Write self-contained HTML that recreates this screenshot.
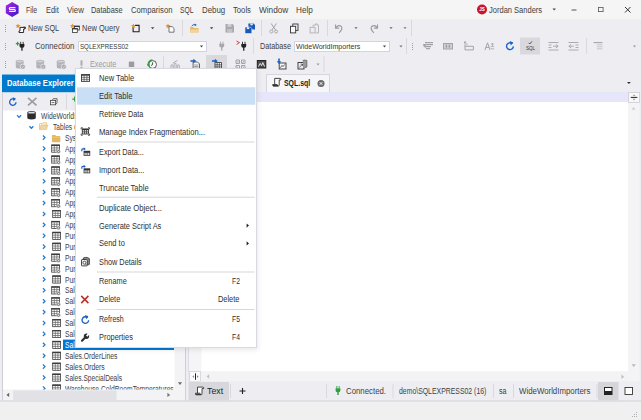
<!DOCTYPE html>
<html><head><meta charset="utf-8"><title>dbForge Studio</title>
<style>
html,body{margin:0;padding:0;}
body{width:641px;height:420px;position:relative;overflow:hidden;background:#eeeef2;font-family:"Liberation Sans", sans-serif;}
body>div,body>svg,body>span{position:absolute;display:block;}
body>span{white-space:nowrap;line-height:12px;height:12px;transform-origin:0 50%;}
svg{overflow:visible;}
</style></head><body>
<div style="left:0px;top:0px;width:641px;height:19px;background:#f5f5f5;"></div>
<svg style="left:5px;top:1px;" width="16" height="18"><g transform="translate(0,0.5)"><defs><linearGradient id="lg" x1="0" y1="0" x2="1" y2="1"><stop offset="0" stop-color="#b026e8"/><stop offset="1" stop-color="#3a16c8"/></linearGradient></defs><polygon points="7.2,0.5 13.6,4.2 13.6,11.7 7.2,15.4 0.8,11.7 0.8,4.2" fill="url(#lg)"/><path d="M10.4 6.1 H5.4 Q4.3 6.1 4.3 7.05 Q4.3 8 5.4 8 H9.3 Q10.4 8 10.4 8.95 Q10.4 9.9 9.3 9.9 H4.2" fill="none" stroke="#fff" stroke-width="1.15"/></g></svg>
<span id="t0" style="left:26.40px;top:3.50px;font-size:8.5px;color:#3e3e3e;transform:scaleX(0.8071);">File</span>
<span id="t1" style="left:46.10px;top:3.50px;font-size:8.5px;color:#3e3e3e;transform:scaleX(0.8733);">Edit</span>
<span id="t2" style="left:66.60px;top:3.50px;font-size:8.5px;color:#3e3e3e;transform:scaleX(0.9222);">View</span>
<span id="t3" style="left:91.40px;top:3.50px;font-size:8.5px;color:#3e3e3e;transform:scaleX(0.8694);">Database</span>
<span id="t4" style="left:130.60px;top:3.50px;font-size:8.5px;color:#3e3e3e;transform:scaleX(0.9043);">Comparison</span>
<span id="t5" style="left:180.40px;top:3.50px;font-size:8.5px;color:#3e3e3e;transform:scaleX(0.8000);">SQL</span>
<span id="t6" style="left:202.10px;top:3.50px;font-size:8.5px;color:#3e3e3e;transform:scaleX(0.9240);">Debug</span>
<span id="t7" style="left:233.40px;top:3.50px;font-size:8.5px;color:#3e3e3e;transform:scaleX(0.9050);">Tools</span>
<span id="t8" style="left:259.10px;top:3.50px;font-size:8.5px;color:#3e3e3e;transform:scaleX(0.9700);">Window</span>
<span id="t9" style="left:295.90px;top:3.50px;font-size:8.5px;color:#3e3e3e;transform:scaleX(0.9588);">Help</span>
<svg style="left:477px;top:4px;" width="11" height="12"><g transform="translate(0,0.5)"><circle cx="5" cy="5" r="5" fill="#c8142c"/><text x="5" y="6.9" font-size="4.6" font-weight="bold" fill="#fff" text-anchor="middle" font-family="Liberation Sans, sans-serif">JS</text></g></svg>
<span id="t10" style="left:489.10px;top:3.50px;font-size:8.5px;color:#3e3e3e;transform:scaleX(0.8850);">Jordan Sanders</span>
<svg style="left:552px;top:8px;" width="5" height="4"><g transform="translate(0.5,0.5)"><polygon points="0,0 3.4,0 1.7,2" fill="#444"/></g></svg>
<svg style="left:571px;top:9px;" width="7" height="3"><g transform="translate(0.5,0.5)"><rect x="0" y="0" width="5" height="1" fill="#555"/></g></svg>
<svg style="left:598px;top:7px;" width="7" height="6"><g transform="translate(0,0)"><rect x="0.4" y="0.4" width="4.7" height="4.2" fill="none" stroke="#555" stroke-width="0.8"/></g></svg>
<svg style="left:625px;top:7px;" width="7" height="7"><g transform="translate(0,0)"><path d="M0 0 L5.5 5.5 M5.5 0 L0 5.5" stroke="#333" stroke-width="1"/></g></svg>
<div style="left:5px;top:25px;width:1px;height:1px;background:#9c9ca2;"></div>
<div style="left:5px;top:27px;width:1px;height:1px;background:#9c9ca2;"></div>
<div style="left:5px;top:29px;width:1px;height:1px;background:#9c9ca2;"></div>
<div style="left:5px;top:31px;width:1px;height:1px;background:#9c9ca2;"></div>
<svg style="left:16px;top:24px;" width="10" height="10"><g transform="translate(0,0)"><path d="M2 -0.5 L2.75 1.1 L4.5 1.3 L3.2 2.5 L3.55 4.2 L2 3.35 L0.45 4.2 L0.8 2.5 L-0.5 1.3 L1.25 1.1 Z" fill="#e8922a"/><path d="M4 3.4 H9 V5 H7.6 V8.5 H3 V7 H4 Z" fill="#fafafc" stroke="#2c2c2c" stroke-width="1"/><path d="M7.2 3.4 H9 V4.8" stroke="#2c2c2c" stroke-width="1.4" fill="none"/></g></svg>
<span id="t11" style="left:28.40px;top:22.00px;font-size:8.5px;color:#3e3e3e;transform:scaleX(0.8556);">New SQL</span>
<svg style="left:70px;top:24px;" width="11" height="10"><g transform="translate(0.5,0)"><path d="M2 -0.5 L2.75 1.1 L4.5 1.3 L3.2 2.5 L3.55 4.2 L2 3.35 L0.45 4.2 L0.8 2.5 L-0.5 1.3 L1.25 1.1 Z" fill="#e8922a"/><rect x="4" y="2.2" width="4.8" height="3.8" fill="#f8f8fa" stroke="#333" stroke-width="0.8"/><rect x="3.6" y="1.8" width="5.6" height="1.2" fill="#333"/><rect x="2" y="4.6" width="4.8" height="3.8" fill="#fdfdfd" stroke="#333" stroke-width="0.8"/><rect x="1.6" y="4.2" width="5.6" height="1.2" fill="#333"/></g></svg>
<span id="t12" style="left:82.10px;top:22.00px;font-size:8.5px;color:#3e3e3e;transform:scaleX(0.8791);">New Query</span>
<svg style="left:131px;top:24px;" width="11" height="10"><g transform="translate(0.5,0)"><path d="M2 -0.5 L2.75 1.1 L4.5 1.3 L3.2 2.5 L3.55 4.2 L2 3.35 L0.45 4.2 L0.8 2.5 L-0.5 1.3 L1.25 1.1 Z" fill="#e8922a"/><path d="M3.6 1.4 H7.6 V7.8 H1.6 V3.6" fill="none" stroke="#222" stroke-width="1.1"/></g></svg>
<svg style="left:150px;top:27px;" width="6" height="4"><g transform="translate(0.9,0.2)"><polygon points="0,0 3.4,0 1.7,2" fill="#444"/></g></svg>
<svg style="left:166px;top:24px;" width="10" height="10"><g transform="translate(0,0)"><path d="M2 -0.5 L2.75 1.1 L4.5 1.3 L3.2 2.5 L3.55 4.2 L2 3.35 L0.45 4.2 L0.8 2.5 L-0.5 1.3 L1.25 1.1 Z" fill="#e8922a"/><path d="M3 2.6 H6.2 L8 4.4 V8.2 H3 Z" fill="#fbfbfd" stroke="#555" stroke-width="0.8"/></g></svg>
<div style="left:182px;top:20px;width:1px;height:16px;background:#d8d8de;"></div>
<svg style="left:189px;top:23px;" width="12" height="12"><g transform="translate(0.5,0.5)"><path d="M0.6 3.6 H3.6 L4.6 4.6 H9 V9 H0.6 Z" fill="#e9b96a"/><path d="M1.4 6 H9.6 L8.6 9 H0.6 Z" fill="#f3d59c"/><path d="M2.2 2.6 Q3.4 0.6 6 1.2" fill="none" stroke="#1e66c8" stroke-width="1"/><path d="M5.2 0 L7.4 1.4 L5.2 2.8 Z" fill="#1e66c8"/></g></svg>
<svg style="left:209px;top:27px;" width="6" height="4"><g transform="translate(0.9,0.2)"><polygon points="0,0 3.4,0 1.7,2" fill="#444"/></g></svg>
<svg style="left:225px;top:24px;" width="10" height="10"><g transform="translate(0.5,0)"><path d="M0 0 H7 L8.5 1.5 V8.5 H0 Z" fill="#a9a9ad"/><rect x="2" y="0" width="4" height="2.8" fill="#d0d0d4"/><rect x="1.6" y="5" width="5.2" height="3.5" fill="#c4c4c8"/></g></svg>
<svg style="left:245px;top:23px;" width="11" height="12"><g transform="translate(0,0.5)"><path d="M3.4 0 H8.6 L10 1.4 V6 H3.4 Z" fill="#1758b8"/><path d="M0 3.6 H5.4 L6.8 5 V10 H0 Z" fill="#1758b8" stroke="#eeeef2" stroke-width="0.6"/><rect x="5.4" y="0" width="2.4" height="1.8" fill="#eeeef2"/><rect x="1.8" y="3.8" width="2.4" height="1.8" fill="#eeeef2"/></g></svg>
<div style="left:261px;top:20px;width:1px;height:16px;background:#d8d8de;"></div>
<svg style="left:269px;top:23px;" width="10" height="12"><g transform="translate(0.5,0.5)"><path d="M1.6 0 L6 6.4 M6.9 0 L2.5 6.4" stroke="#a2a2a6" stroke-width="1" fill="none"/><circle cx="1.9" cy="8" r="1.5" fill="none" stroke="#a2a2a6" stroke-width="0.9"/><circle cx="6.6" cy="8" r="1.5" fill="none" stroke="#a2a2a6" stroke-width="0.9"/></g></svg>
<svg style="left:290px;top:23px;" width="10" height="12"><g transform="translate(0,0.5)"><rect x="2.8" y="0.5" width="5.2" height="6.4" fill="#f4f4f6" stroke="#333" stroke-width="0.9"/><rect x="0.5" y="2.8" width="5.2" height="6.6" fill="#f8f8fa" stroke="#333" stroke-width="0.9"/></g></svg>
<svg style="left:309px;top:23px;" width="11" height="12"><g transform="translate(0.5,0.5)"><path d="M3.6 3.2 V1.6 H6 V0.4 H7.6 V1.6 H9 V9.4 H6.4" fill="none" stroke="#b0b0b4" stroke-width="0.9"/><rect x="0.6" y="3.8" width="5" height="5.6" fill="none" stroke="#b0b0b4" stroke-width="0.9"/></g></svg>
<div style="left:327px;top:20px;width:1px;height:16px;background:#d8d8de;"></div>
<svg style="left:333px;top:23px;" width="12" height="12"><g transform="translate(0.5,0.5)"><path d="M2 1 V4.6 H5.6" fill="none" stroke="#9c9ca0" stroke-width="1.1"/><path d="M2.2 4.4 Q5 0.6 7.8 3 Q9.6 5.4 5.6 9.4" fill="none" stroke="#9c9ca0" stroke-width="1.2"/></g></svg>
<svg style="left:354px;top:27px;" width="5" height="4"><g transform="translate(0.4,0.3)"><polygon points="0,0 3.2,0 1.6,1.8" fill="#666"/></g></svg>
<svg style="left:369px;top:23px;" width="12" height="12"><g transform="translate(0.5,0.5)"><path d="M8 1 V4.6 H4.4" fill="none" stroke="#9c9ca0" stroke-width="1.1"/><path d="M7.8 4.4 Q5 0.6 2.2 3 Q0.4 5.4 4.4 9.4" fill="none" stroke="#9c9ca0" stroke-width="1.2"/></g></svg>
<svg style="left:389px;top:27px;" width="5" height="4"><g transform="translate(0.4,0.3)"><polygon points="0,0 3.2,0 1.6,1.8" fill="#666"/></g></svg>
<svg style="left:403px;top:27px;" width="5" height="4"><g transform="translate(0.4,0.3)"><polygon points="0,0 3.2,0 1.6,1.8" fill="#777"/></g></svg>
<div style="left:411px;top:20px;width:1px;height:16px;background:#d8d8de;"></div>
<div style="left:5px;top:43px;width:1px;height:1px;background:#9c9ca2;"></div>
<div style="left:5px;top:45px;width:1px;height:1px;background:#9c9ca2;"></div>
<div style="left:5px;top:47px;width:1px;height:1px;background:#9c9ca2;"></div>
<div style="left:5px;top:49px;width:1px;height:1px;background:#9c9ca2;"></div>
<svg style="left:15px;top:41px;" width="6" height="6"><g transform="translate(0.8,0.8)"><path d="M1.8 0 V3.6 M0 1.8 H3.6" stroke="#2f9e3f" stroke-width="1.3"/></g></svg>
<svg style="left:19px;top:41px;" width="7" height="11"><g transform="translate(0.2,0.8)"><path d="M1.5 0 V2.4 M4 0 V2.4" stroke="#222" stroke-width="0.9"/><path d="M0.3 2.2 H5.2 V4.2 Q5.2 5.8 3.4 6 V9 H2.1 V6 Q0.3 5.8 0.3 4.2 Z" fill="#222"/></g></svg>
<span id="t13" style="left:35.40px;top:40.00px;font-size:8.5px;color:#3e3e3e;transform:scaleX(0.9163);">Connection</span>
<div style="left:78px;top:40.5px;width:128.5px;height:11.5px;background:#fff;border:1px solid #d3d3e6;box-sizing:border-box;"></div>
<span id="t14" style="left:80.40px;top:40.90px;font-size:8.0px;color:#333;transform:scaleX(0.7714);">SQLEXPRESS02</span>
<svg style="left:199px;top:45px;" width="6" height="4"><g transform="translate(0.9,0.6)"><polygon points="0,0 3.2,0 1.6,1.8" fill="#444"/></g></svg>
<svg style="left:219px;top:41px;" width="7" height="11"><g transform="translate(0,0.6)"><path d="M1.5 0 V2.4 M4 0 V2.4" stroke="#a8a8ac" stroke-width="0.9"/><path d="M0.3 2.2 H5.2 V4.2 Q5.2 5.8 3.4 6 V9 H2.1 V6 Q0.3 5.8 0.3 4.2 Z" fill="#a8a8ac"/></g></svg>
<svg style="left:241px;top:41px;" width="7" height="11"><g transform="translate(0,0.8)"><path d="M1.5 0 V2.4 M4 0 V2.4" stroke="#222" stroke-width="0.9"/><path d="M0.3 2.2 H5.2 V4.2 Q5.2 5.8 3.4 6 V9 H2.1 V6 Q0.3 5.8 0.3 4.2 Z" fill="#222"/></g></svg>
<svg style="left:236px;top:41px;" width="6" height="5"><g transform="translate(0.5,0)"><path d="M0 0 L3 1.6 L0 3.4" fill="none" stroke="#d03030" stroke-width="0.9"/></g></svg>
<div style="left:253px;top:38px;width:1px;height:16px;background:#d8d8de;"></div>
<span id="t15" style="left:259.60px;top:40.00px;font-size:8.5px;color:#3e3e3e;transform:scaleX(0.8500);">Database</span>
<div style="left:293.5px;top:40.5px;width:96.5px;height:11.5px;background:#fff;border:1px solid #d3d3e6;box-sizing:border-box;"></div>
<span id="t16" style="left:295.60px;top:40.90px;font-size:8.0px;color:#333;transform:scaleX(0.8849);">WideWorldImporters</span>
<svg style="left:382px;top:45px;" width="6" height="4"><g transform="translate(0.9,0.6)"><polygon points="0,0 3.2,0 1.6,1.8" fill="#444"/></g></svg>
<svg style="left:399px;top:45px;" width="5" height="4"><g transform="translate(0.4,0.6)"><polygon points="0,0 3.2,0 1.6,1.8" fill="#777"/></g></svg>
<div style="left:406px;top:38px;width:1px;height:16px;background:#d8d8de;"></div>
<div style="left:412px;top:43px;width:1px;height:1px;background:#9c9ca2;"></div>
<div style="left:412px;top:45px;width:1px;height:1px;background:#9c9ca2;"></div>
<div style="left:412px;top:47px;width:1px;height:1px;background:#9c9ca2;"></div>
<div style="left:412px;top:49px;width:1px;height:1px;background:#9c9ca2;"></div>
<svg style="left:423px;top:41px;" width="11" height="11"><g transform="translate(0,0.5)"><path d="M2 1 H10 M0 3 H10 M2 5 H8 M3 7 H7" stroke="#a4a4a8" stroke-width="1.25"/><path d="M0 4.6 L2.6 2.6 V6.6 Z" fill="#a4a4a8"/></g></svg>
<svg style="left:443px;top:43px;" width="11" height="8"><g transform="translate(0,0)"><rect x="0.5" y="0.5" width="9" height="5.5" fill="#d2d2d6" stroke="#a4a4a8" stroke-width="1"/><rect x="2.6" y="1.6" width="1.6" height="3.2" fill="#a4a4a8"/><rect x="5.6" y="1.6" width="1.6" height="3.2" fill="#a4a4a8"/></g></svg>
<svg style="left:464px;top:41px;" width="11" height="11"><g transform="translate(0,0.5)"><path d="M0.8 0.6 L3.6 3.6 M1 2.8 V8.4 H9.4 V4.8 H1" fill="none" stroke="#a4a4a8" stroke-width="1"/><path d="M0 0 H2.6 L0 2.6 Z" fill="#a4a4a8"/></g></svg>
<svg style="left:484px;top:42px;" width="12" height="9"><g transform="translate(0.5,0)"><path d="M0.4 8 L3 0.8 L5.6 8 M1.4 5.4 H4.6" fill="none" stroke="#a4a4a8" stroke-width="1"/><path d="M6.2 4.6 H9.6 M7.9 1.2 V4.4 M6.6 2.6 L7.9 1 L9.2 2.6 M6.2 6.8 H9.6" fill="none" stroke="#a4a4a8" stroke-width="0.8"/></g></svg>
<svg style="left:505px;top:41px;" width="10" height="11"><g transform="translate(0.5,0.2) scale(1.0000,1.0000) translate(-0,-0)"><path d="M6.9 2.6 A3.4 3.4 0 1 0 7.9 5.2" fill="none" stroke="#1a62c4" stroke-width="1.4"/><path d="M4.2 -0.2 L7.8 1.2 L5.3 4.2 Z" fill="#1a62c4"/></g></svg>
<svg style="left:520px;top:37px;" width="21" height="19"><g transform="translate(0,0.5)"><rect x="0" y="0" width="20" height="17" fill="#d9d9dd"/></g></svg>
<svg style="left:526px;top:41px;" width="10" height="11"><g transform="translate(0,0)"><path d="M2.6 1.8 L3.8 3 L6 0.4" fill="none" stroke="#333" stroke-width="0.8"/><text x="4.5" y="8.6" font-size="4.6" fill="#333" text-anchor="middle" font-family="Liberation Sans, sans-serif">SQL</text></g></svg>
<svg style="left:548px;top:42px;" width="12" height="9"><g transform="translate(0.5,0)"><path d="M0 0.5 H10 M0 3 H3 M0 5.5 H3 M0 8 H10" stroke="#a4a4a8" stroke-width="0.9"/><path d="M4.6 4.2 H9.6 M7.4 2.4 L9.6 4.2 L7.4 6" fill="none" stroke="#a4a4a8" stroke-width="0.9"/></g></svg>
<svg style="left:568px;top:42px;" width="12" height="9"><g transform="translate(0.5,0)"><path d="M0 0.5 H10 M7 3 H10 M7 5.5 H10 M0 8 H10" stroke="#a4a4a8" stroke-width="0.9"/><path d="M0.4 4.2 H5.4 M2.6 2.4 L0.4 4.2 L2.6 6" fill="none" stroke="#a4a4a8" stroke-width="0.9"/></g></svg>
<div style="left:586px;top:38px;width:1px;height:16px;background:#d8d8de;"></div>
<svg style="left:593px;top:42px;" width="11" height="9"><g transform="translate(0.5,0)"><path d="M0 0.6 H9" stroke="#a4a4a8" stroke-width="1.1"/><path d="M3.4 2.8 H9 M3.4 4.8 H9 M3.4 6.8 H9" stroke="#bcbcc0" stroke-width="0.8"/></g></svg>
<svg style="left:632px;top:45px;" width="6" height="4"><g transform="translate(0.9,0.6)"><polygon points="0,0 3.2,0 1.6,1.8" fill="#9a9a9e"/></g></svg>
<div style="left:5px;top:61px;width:1px;height:1px;background:#9c9ca2;"></div>
<div style="left:5px;top:63px;width:1px;height:1px;background:#9c9ca2;"></div>
<div style="left:5px;top:65px;width:1px;height:1px;background:#9c9ca2;"></div>
<div style="left:5px;top:67px;width:1px;height:1px;background:#9c9ca2;"></div>
<svg style="left:15px;top:59px;" width="12" height="12"><g transform="translate(0.5,0.5)"><path d="M0.3 1.8 Q0.3 0.2 4.2 0.2 Q8.1 0.2 8.1 1.8 V7.4 Q8.1 9 4.2 9 Q0.3 9 0.3 7.4 Z" fill="#b2b2b6"/><ellipse cx="4.2" cy="1.9" rx="3.2" ry="1" fill="#d2d2d6"/><path d="M0.5 4.4 Q4.2 6 7.9 4.4" fill="none" stroke="#c8c8cc" stroke-width="0.6"/><circle cx="7.3" cy="7.2" r="2.5" fill="#a6a6aa" stroke="#eeeef2" stroke-width="0.7"/><path d="M6.2 7.2 L7 8 L8.4 6.4" fill="none" stroke="#e6e6ea" stroke-width="0.8"/></g></svg>
<svg style="left:36px;top:59px;" width="11" height="12"><g transform="translate(0,0.5)"><path d="M0.3 1.8 Q0.3 0.2 4.2 0.2 Q8.1 0.2 8.1 1.8 V7.4 Q8.1 9 4.2 9 Q0.3 9 0.3 7.4 Z" fill="#b2b2b6"/><ellipse cx="4.2" cy="1.9" rx="3.2" ry="1" fill="#d2d2d6"/><path d="M0.5 4.4 Q4.2 6 7.9 4.4" fill="none" stroke="#c8c8cc" stroke-width="0.6"/><circle cx="7.3" cy="7.2" r="2.5" fill="#a6a6aa" stroke="#eeeef2" stroke-width="0.7"/><path d="M6.2 7.2 L7 8 L8.4 6.4" fill="none" stroke="#e6e6ea" stroke-width="0.8"/></g></svg>
<svg style="left:56px;top:59px;" width="12" height="12"><g transform="translate(0.5,0.5)"><path d="M0.3 1.8 Q0.3 0.2 4.2 0.2 Q8.1 0.2 8.1 1.8 V7.4 Q8.1 9 4.2 9 Q0.3 9 0.3 7.4 Z" fill="#b2b2b6"/><ellipse cx="4.2" cy="1.9" rx="3.2" ry="1" fill="#d2d2d6"/><path d="M0.5 4.4 Q4.2 6 7.9 4.4" fill="none" stroke="#c8c8cc" stroke-width="0.6"/><circle cx="7.3" cy="7.2" r="2.5" fill="#a6a6aa" stroke="#eeeef2" stroke-width="0.7"/><path d="M6.2 7.2 L7 8 L8.4 6.4" fill="none" stroke="#e6e6ea" stroke-width="0.8"/></g></svg>
<svg style="left:80px;top:60px;" width="4" height="7"><g transform="translate(0.5,0.4)"><rect x="0" y="0" width="2" height="5.3" fill="#acacb0"/></g></svg>
<svg style="left:80px;top:66px;" width="4" height="4"><g transform="translate(0.5,0.8)"><rect x="0" y="0" width="2" height="1.6" fill="#acacb0"/></g></svg>
<span id="t17" style="left:89.60px;top:58.30px;font-size:8.5px;color:#9c9ca0;transform:scaleX(0.8581);">Execute</span>
<svg style="left:128px;top:61px;" width="8" height="7"><g transform="translate(0.8,0.6)"><rect x="0" y="0" width="5.4" height="5.4" fill="#9c9ca0"/></g></svg>
<svg style="left:147px;top:59px;" width="12" height="12"><g transform="translate(0,0.5)"><circle cx="5.6" cy="5" r="3.9" fill="#fafafa" stroke="#333" stroke-width="0.8"/><path d="M5.6 2.8 V5.2 L4 6" fill="none" stroke="#222" stroke-width="0.8"/><path d="M1.2 6 A4.6 4.6 0 0 1 5.4 0.4" fill="none" stroke="#2f9e3f" stroke-width="1.3"/><path d="M0 4.4 L3.2 5 L1.2 7.6 Z" fill="#2f9e3f"/></g></svg>
<div style="left:163px;top:56px;width:1px;height:16px;background:#d8d8de;"></div>
<svg style="left:170px;top:60px;" width="11" height="11"><g transform="translate(0.5,0)"><path d="M0.5 9.5 V5 H2.5 V9.5 M3.6 9.5 V3.6 H5.6 V9.5 M6.8 9.5 V5 H8.8 V9.5" fill="none" stroke="#a4a4a8" stroke-width="0.8"/><path d="M2.4 3 L6.8 0.6" stroke="#a4a4a8" stroke-width="0.9"/></g></svg>
<svg style="left:190px;top:59px;" width="12" height="12"><g transform="translate(0.5,0)"><path d="M2.6 3 H7 L9 5 V10 H2.6 Z" fill="#f4f4f6" stroke="#444" stroke-width="0.8"/><path d="M3.6 7.5 H8 M3.6 9 H8 M3.6 6 H8" stroke="#666" stroke-width="0.6"/><path d="M0 2 H3.6" stroke="#1a62c4" stroke-width="1.6"/><path d="M2.8 -0.2 L5.8 2 L2.8 4.2 Z" fill="#1a62c4"/></g></svg>
<div style="left:206px;top:55px;width:21px;height:18px;background:#d9d9dd;"></div>
<svg style="left:212px;top:59px;" width="11" height="12"><g transform="translate(0,0)"><rect x="3" y="3.6" width="6.4" height="6.4" fill="#fafafa" stroke="#333" stroke-width="0.8"/><path d="M3 5.8 H9.4 M3 7.9 H9.4 M5.1 3.6 V10 M7.3 3.6 V10" stroke="#333" stroke-width="0.7"/><path d="M0 2 H3.6" stroke="#1a62c4" stroke-width="1.6"/><path d="M2.8 -0.2 L5.8 2 L2.8 4.2 Z" fill="#1a62c4"/></g></svg>
<svg style="left:235px;top:59px;" width="12" height="12"><g transform="translate(0.5,0.5)"><path d="M0.5 0.5 H4 V4 H0.5 Z M6 0.5 H9.5 V4 H6 Z M0.5 6 H4 V9.5 H0.5 Z M6 6 H9.5 V9.5 H6 Z" fill="none" stroke="#a4a4a8" stroke-width="1"/><path d="M1.4 3.4 L3 1.4 M7 3.4 L8.6 1.4 M1.4 7 L3 9 M7 7 L8.6 9" stroke="#a4a4a8" stroke-width="0.9"/></g></svg>
<svg style="left:256px;top:60px;" width="12" height="10"><g transform="translate(0.8,0)"><rect x="0.5" y="0.5" width="8.5" height="7.5" fill="#4a4a4a" stroke="#222" stroke-width="1"/><path d="M1.6 6.6 L3.4 3.4 L4.8 5.6 L6 2.6 L7.8 6.6" fill="none" stroke="#f4f4f4" stroke-width="0.9"/></g></svg>
<svg style="left:277px;top:59px;" width="11" height="12"><g transform="translate(0,0)"><rect x="2.2" y="4" width="6.8" height="6" fill="#f4f4f6" stroke="#333" stroke-width="0.9"/><path d="M3.4 8.8 L5 6.4 L6 7.6 L7.8 5.4" fill="none" stroke="#333" stroke-width="0.7"/><path d="M2 -0.4 V3" stroke="#1a62c4" stroke-width="1.6"/><path d="M-0.2 2.2 L2 5 L4.2 2.2 Z" fill="#1a62c4"/></g></svg>
<svg style="left:297px;top:59px;" width="12" height="12"><g transform="translate(0.5,0.5)"><rect x="0.5" y="3" width="6" height="6.5" fill="#ececf0" stroke="#333" stroke-width="0.9"/><path d="M1.8 8 L5 4.6 M3.2 4.6 H5 V6.4" fill="none" stroke="#333" stroke-width="0.7"/><path d="M5.2 1 Q7.4 0 9.4 1 V7.4 Q8 8.2 7 8" fill="#9a9a9e" stroke="#444" stroke-width="0.6"/></g></svg>
<svg style="left:316px;top:63px;" width="5" height="4"><g transform="translate(0.4,0.6)"><polygon points="0,0 3.2,0 1.6,1.8" fill="#999"/></g></svg>
<svg style="left:323px;top:56px;" width="3" height="17"><g transform="translate(0.5,0)"><rect x="0" y="0" width="1" height="16" fill="#d8d8de"/></g></svg>
<svg style="left:2px;top:74px;" width="184" height="328"><g transform="translate(0,0.5)"><rect x="0" y="0" width="183" height="326" fill="#ffffff"/></g></svg>
<svg style="left:2px;top:74px;" width="184" height="20"><g transform="translate(0,0.5)"><rect x="0" y="0" width="183" height="18" fill="#007acc"/></g></svg>
<span id="t18" style="left:7.00px;top:77.30px;font-size:8.5px;color:#ffffff;font-weight:bold;transform:scaleX(0.8933);">Database Explorer</span>
<svg style="left:2px;top:92px;" width="184" height="20"><g transform="translate(0,0.5)"><rect x="0" y="0" width="183" height="18" fill="#eeeef2"/></g></svg>
<svg style="left:8px;top:97px;" width="10" height="10"><g transform="translate(0.6,0.4) scale(0.9412,0.9444) translate(-0,-0)"><path d="M6.9 2.6 A3.4 3.4 0 1 0 7.9 5.2" fill="none" stroke="#1a62c4" stroke-width="1.4"/><path d="M4.2 -0.2 L7.8 1.2 L5.3 4.2 Z" fill="#1a62c4"/></g></svg>
<svg style="left:27px;top:97px;" width="11" height="10"><g transform="translate(0.5,0.8)"><path d="M0.5 0 L9 7.6 M9 0 L0.5 7.6" stroke="#9c9ca0" stroke-width="1.6"/></g></svg>
<svg style="left:50px;top:98px;" width="9" height="9"><g transform="translate(0,0.2)"><path d="M2 2.2 L3.4 0.4 H7.1 V4.6 L5.6 6.4" fill="#d8d8dc" stroke="#444" stroke-width="0.7"/><rect x="0.4" y="2.2" width="5.2" height="4.4" fill="#fafafc" stroke="#444" stroke-width="0.8"/><path d="M1.6 4.4 H4.4" stroke="#444" stroke-width="0.8"/></g></svg>
<div style="left:66px;top:94px;width:1px;height:15px;background:#d8d8de;"></div>
<svg style="left:72px;top:96px;" width="7" height="7"><g transform="translate(0.3,0.6)"><path d="M2.5 0 V5 M0 2.5 H5" stroke="#2f9e3f" stroke-width="1.4"/></g></svg>
<svg style="left:2px;top:92px;" width="2" height="310"><g transform="translate(0,0.5)"><rect x="0" y="0" width="1" height="308" fill="#cfcfd6"/></g></svg>
<svg style="left:16px;top:114px;" width="7" height="5"><g transform="translate(0.8,0.9)"><path d="M0.3 0.4 L2.3 2.5 L4.3 0.4" fill="none" stroke="#1f7ad2" stroke-width="1.25"/></g></svg>
<svg style="left:27px;top:111px;" width="10" height="10"><g transform="translate(0.3,0.1)"><path d="M0 1.7 Q0 0 4.25 0 Q8.5 0 8.5 1.7 V6.7 Q8.5 8.4 4.25 8.4 Q0 8.4 0 6.7 Z" fill="#2c2c2c"/><ellipse cx="4.25" cy="1.6" rx="3.4" ry="0.9" fill="#d8d8d8"/></g></svg>
<span id="t19" style="left:40.60px;top:110.00px;font-size:8.5px;color:#3e3e3e;transform:scaleX(0.8000);">WideWorldImporters</span>
<svg style="left:29px;top:125px;" width="6" height="5"><g transform="translate(0.1,0.805)"><path d="M0.3 0.4 L2.3 2.5 L4.3 0.4" fill="none" stroke="#1f7ad2" stroke-width="1.25"/></g></svg>
<svg style="left:39px;top:122px;" width="10" height="9"><g transform="translate(0.2,0.505)"><path d="M0.3 7 V1.6 Q0.3 1 0.9 1 H3 L3.8 0.3 H7.4 V2.4" fill="#fbf3e2" stroke="#e2b870" stroke-width="0.7"/><path d="M2 2.6 H8.6 L7.2 7.1 H0.4 Z" fill="#f1d6a4" stroke="#e2b870" stroke-width="0.6"/></g></svg>
<span id="t20" style="left:52.70px;top:120.91px;font-size:8.5px;color:#3e3e3e;transform:scaleX(0.7800);">Tables</span>
<svg style="left:74px;top:125px;" width="3" height="6"><g transform="translate(0.3,0.505)"><rect x="0" y="0" width="1.7" height="3.6" fill="#e08a2c"/></g></svg>
<svg style="left:42px;top:135px;" width="5" height="7"><g transform="translate(0.5,0.21)"><path d="M0.4 0.3 L2.5 2.4 L0.4 4.5" fill="none" stroke="#1f7ad2" stroke-width="1.25"/></g></svg>
<svg style="left:51px;top:135px;" width="11" height="9"><g transform="translate(0.9,0.11)"><path d="M0 0.7 Q0 0 0.7 0 H3.4 L4.3 1 H7.7 Q8.4 1 8.4 1.7 V6.5 Q8.4 7.2 7.7 7.2 H0.7 Q0 7.2 0 6.5 Z" fill="#e3b661"/><path d="M0.2 2.2 H8.2" stroke="#f0d092" stroke-width="0.6"/></g></svg>
<span id="t21" style="left:65.10px;top:131.81px;font-size:8.5px;color:#3e3e3e;transform:scaleX(0.7900);">System Tables</span>
<svg style="left:42px;top:146px;" width="5" height="6"><g transform="translate(0.5,0.115)"><path d="M0.4 0.3 L2.5 2.4 L0.4 4.5" fill="none" stroke="#1f7ad2" stroke-width="1.25"/></g></svg>
<svg style="left:51px;top:144px;" width="10" height="10"><g transform="translate(0.3,0.615)"><rect x="0.4" y="0.4" width="7.7" height="7.2" fill="#ffffff" stroke="#3c3c3c" stroke-width="0.8"/><path d="M0.4 3.3 H8.1 M0.4 5.5 H8.1 M3 1.4 V7.6 M5.6 1.4 V7.6" stroke="#5a5a5a" stroke-width="0.7"/><rect x="0" y="0" width="8.5" height="1.4" fill="#3c3c3c"/><circle cx="7.3" cy="7" r="1.9" fill="#77777b" stroke="#fff" stroke-width="0.5"/><circle cx="7.3" cy="7" r="0.7" fill="#ececf0"/></g></svg>
<span id="t22" style="left:64.60px;top:142.71px;font-size:8.5px;color:#3e3e3e;transform:scaleX(0.7900);">Application.Cities</span>
<svg style="left:42px;top:157px;" width="5" height="6"><g transform="translate(0.5,0.02)"><path d="M0.4 0.3 L2.5 2.4 L0.4 4.5" fill="none" stroke="#1f7ad2" stroke-width="1.25"/></g></svg>
<svg style="left:51px;top:155px;" width="10" height="10"><g transform="translate(0.3,0.52)"><rect x="0.4" y="0.4" width="7.7" height="7.2" fill="#ffffff" stroke="#3c3c3c" stroke-width="0.8"/><path d="M0.4 3.3 H8.1 M0.4 5.5 H8.1 M3 1.4 V7.6 M5.6 1.4 V7.6" stroke="#5a5a5a" stroke-width="0.7"/><rect x="0" y="0" width="8.5" height="1.4" fill="#3c3c3c"/><circle cx="7.3" cy="7" r="1.9" fill="#77777b" stroke="#fff" stroke-width="0.5"/><circle cx="7.3" cy="7" r="0.7" fill="#ececf0"/></g></svg>
<span id="t23" style="left:64.60px;top:153.62px;font-size:8.5px;color:#3e3e3e;transform:scaleX(0.7900);">Application.Countries</span>
<svg style="left:42px;top:167px;" width="5" height="7"><g transform="translate(0.5,0.925)"><path d="M0.4 0.3 L2.5 2.4 L0.4 4.5" fill="none" stroke="#1f7ad2" stroke-width="1.25"/></g></svg>
<svg style="left:51px;top:166px;" width="10" height="10"><g transform="translate(0.3,0.425)"><rect x="0.4" y="0.4" width="7.7" height="7.2" fill="#ffffff" stroke="#3c3c3c" stroke-width="0.8"/><path d="M0.4 3.3 H8.1 M0.4 5.5 H8.1 M3 1.4 V7.6 M5.6 1.4 V7.6" stroke="#5a5a5a" stroke-width="0.7"/><rect x="0" y="0" width="8.5" height="1.4" fill="#3c3c3c"/><circle cx="7.3" cy="7" r="1.9" fill="#77777b" stroke="#fff" stroke-width="0.5"/><circle cx="7.3" cy="7" r="0.7" fill="#ececf0"/></g></svg>
<span id="t24" style="left:64.60px;top:164.52px;font-size:8.5px;color:#3e3e3e;transform:scaleX(0.7900);">Application.DeliveryMethods</span>
<svg style="left:42px;top:178px;" width="5" height="7"><g transform="translate(0.5,0.83)"><path d="M0.4 0.3 L2.5 2.4 L0.4 4.5" fill="none" stroke="#1f7ad2" stroke-width="1.25"/></g></svg>
<svg style="left:51px;top:177px;" width="10" height="10"><g transform="translate(0.3,0.33)"><rect x="0.4" y="0.4" width="7.7" height="7.2" fill="#ffffff" stroke="#3c3c3c" stroke-width="0.8"/><path d="M0.4 3.3 H8.1 M0.4 5.5 H8.1 M3 1.4 V7.6 M5.6 1.4 V7.6" stroke="#5a5a5a" stroke-width="0.7"/><rect x="0" y="0" width="8.5" height="1.4" fill="#3c3c3c"/><circle cx="7.3" cy="7" r="1.9" fill="#77777b" stroke="#fff" stroke-width="0.5"/><circle cx="7.3" cy="7" r="0.7" fill="#ececf0"/></g></svg>
<span id="t25" style="left:64.60px;top:175.43px;font-size:8.5px;color:#3e3e3e;transform:scaleX(0.7900);">Application.PaymentMethods</span>
<svg style="left:42px;top:189px;" width="5" height="7"><g transform="translate(0.5,0.735)"><path d="M0.4 0.3 L2.5 2.4 L0.4 4.5" fill="none" stroke="#1f7ad2" stroke-width="1.25"/></g></svg>
<svg style="left:51px;top:188px;" width="10" height="10"><g transform="translate(0.3,0.235)"><rect x="0.4" y="0.4" width="7.7" height="7.2" fill="#ffffff" stroke="#3c3c3c" stroke-width="0.8"/><path d="M0.4 3.3 H8.1 M0.4 5.5 H8.1 M3 1.4 V7.6 M5.6 1.4 V7.6" stroke="#5a5a5a" stroke-width="0.7"/><rect x="0" y="0" width="8.5" height="1.4" fill="#3c3c3c"/><circle cx="7.3" cy="7" r="1.9" fill="#77777b" stroke="#fff" stroke-width="0.5"/><circle cx="7.3" cy="7" r="0.7" fill="#ececf0"/></g></svg>
<span id="t26" style="left:64.60px;top:186.33px;font-size:8.5px;color:#3e3e3e;transform:scaleX(0.7900);">Application.People</span>
<svg style="left:42px;top:200px;" width="5" height="7"><g transform="translate(0.5,0.64)"><path d="M0.4 0.3 L2.5 2.4 L0.4 4.5" fill="none" stroke="#1f7ad2" stroke-width="1.25"/></g></svg>
<svg style="left:51px;top:199px;" width="10" height="10"><g transform="translate(0.3,0.14)"><rect x="0.4" y="0.4" width="7.7" height="7.2" fill="#ffffff" stroke="#3c3c3c" stroke-width="0.8"/><path d="M0.4 3.3 H8.1 M0.4 5.5 H8.1 M3 1.4 V7.6 M5.6 1.4 V7.6" stroke="#5a5a5a" stroke-width="0.7"/><rect x="0" y="0" width="8.5" height="1.4" fill="#3c3c3c"/><circle cx="7.3" cy="7" r="1.9" fill="#77777b" stroke="#fff" stroke-width="0.5"/><circle cx="7.3" cy="7" r="0.7" fill="#ececf0"/></g></svg>
<span id="t27" style="left:64.60px;top:197.24px;font-size:8.5px;color:#3e3e3e;transform:scaleX(0.7900);">Application.StateProvinces</span>
<svg style="left:42px;top:211px;" width="5" height="7"><g transform="translate(0.5,0.545)"><path d="M0.4 0.3 L2.5 2.4 L0.4 4.5" fill="none" stroke="#1f7ad2" stroke-width="1.25"/></g></svg>
<svg style="left:52px;top:210px;" width="10" height="10"><g transform="translate(0.3,0.045)"><rect x="0.4" y="0.4" width="7.7" height="7.2" fill="#ffffff" stroke="#3c3c3c" stroke-width="0.8"/><path d="M0.4 3.3 H8.1 M0.4 5.5 H8.1 M3 1.4 V7.6 M5.6 1.4 V7.6" stroke="#5a5a5a" stroke-width="0.7"/><rect x="0" y="0" width="8.5" height="1.4" fill="#3c3c3c"/></g></svg>
<span id="t28" style="left:64.60px;top:208.14px;font-size:8.5px;color:#3e3e3e;transform:scaleX(0.7900);">Application.SystemParameters</span>
<svg style="left:42px;top:222px;" width="5" height="7"><g transform="translate(0.5,0.45)"><path d="M0.4 0.3 L2.5 2.4 L0.4 4.5" fill="none" stroke="#1f7ad2" stroke-width="1.25"/></g></svg>
<svg style="left:51px;top:220px;" width="10" height="10"><g transform="translate(0.3,0.95)"><rect x="0.4" y="0.4" width="7.7" height="7.2" fill="#ffffff" stroke="#3c3c3c" stroke-width="0.8"/><path d="M0.4 3.3 H8.1 M0.4 5.5 H8.1 M3 1.4 V7.6 M5.6 1.4 V7.6" stroke="#5a5a5a" stroke-width="0.7"/><rect x="0" y="0" width="8.5" height="1.4" fill="#3c3c3c"/><circle cx="7.3" cy="7" r="1.9" fill="#77777b" stroke="#fff" stroke-width="0.5"/><circle cx="7.3" cy="7" r="0.7" fill="#ececf0"/></g></svg>
<span id="t29" style="left:64.60px;top:219.05px;font-size:8.5px;color:#3e3e3e;transform:scaleX(0.7900);">Application.TransactionTypes</span>
<svg style="left:42px;top:233px;" width="5" height="7"><g transform="translate(0.5,0.355)"><path d="M0.4 0.3 L2.5 2.4 L0.4 4.5" fill="none" stroke="#1f7ad2" stroke-width="1.25"/></g></svg>
<svg style="left:52px;top:231px;" width="10" height="10"><g transform="translate(0.3,0.855)"><rect x="0.4" y="0.4" width="7.7" height="7.2" fill="#ffffff" stroke="#3c3c3c" stroke-width="0.8"/><path d="M0.4 3.3 H8.1 M0.4 5.5 H8.1 M3 1.4 V7.6 M5.6 1.4 V7.6" stroke="#5a5a5a" stroke-width="0.7"/><rect x="0" y="0" width="8.5" height="1.4" fill="#3c3c3c"/></g></svg>
<span id="t30" style="left:64.60px;top:229.95px;font-size:8.5px;color:#3e3e3e;transform:scaleX(0.7900);">Purchasing.PurchaseOrderLines</span>
<svg style="left:42px;top:244px;" width="5" height="7"><g transform="translate(0.5,0.26)"><path d="M0.4 0.3 L2.5 2.4 L0.4 4.5" fill="none" stroke="#1f7ad2" stroke-width="1.25"/></g></svg>
<svg style="left:52px;top:242px;" width="10" height="10"><g transform="translate(0.3,0.76)"><rect x="0.4" y="0.4" width="7.7" height="7.2" fill="#ffffff" stroke="#3c3c3c" stroke-width="0.8"/><path d="M0.4 3.3 H8.1 M0.4 5.5 H8.1 M3 1.4 V7.6 M5.6 1.4 V7.6" stroke="#5a5a5a" stroke-width="0.7"/><rect x="0" y="0" width="8.5" height="1.4" fill="#3c3c3c"/></g></svg>
<span id="t31" style="left:64.60px;top:240.86px;font-size:8.5px;color:#3e3e3e;transform:scaleX(0.7900);">Purchasing.PurchaseOrders</span>
<svg style="left:42px;top:255px;" width="5" height="6"><g transform="translate(0.5,0.165)"><path d="M0.4 0.3 L2.5 2.4 L0.4 4.5" fill="none" stroke="#1f7ad2" stroke-width="1.25"/></g></svg>
<svg style="left:51px;top:253px;" width="10" height="10"><g transform="translate(0.3,0.665)"><rect x="0.4" y="0.4" width="7.7" height="7.2" fill="#ffffff" stroke="#3c3c3c" stroke-width="0.8"/><path d="M0.4 3.3 H8.1 M0.4 5.5 H8.1 M3 1.4 V7.6 M5.6 1.4 V7.6" stroke="#5a5a5a" stroke-width="0.7"/><rect x="0" y="0" width="8.5" height="1.4" fill="#3c3c3c"/><circle cx="7.3" cy="7" r="1.9" fill="#77777b" stroke="#fff" stroke-width="0.5"/><circle cx="7.3" cy="7" r="0.7" fill="#ececf0"/></g></svg>
<span id="t32" style="left:64.60px;top:251.76px;font-size:8.5px;color:#3e3e3e;transform:scaleX(0.7900);">Purchasing.SupplierCategories</span>
<svg style="left:42px;top:266px;" width="5" height="6"><g transform="translate(0.5,0.07)"><path d="M0.4 0.3 L2.5 2.4 L0.4 4.5" fill="none" stroke="#1f7ad2" stroke-width="1.25"/></g></svg>
<svg style="left:51px;top:264px;" width="10" height="10"><g transform="translate(0.3,0.57)"><rect x="0.4" y="0.4" width="7.7" height="7.2" fill="#ffffff" stroke="#3c3c3c" stroke-width="0.8"/><path d="M0.4 3.3 H8.1 M0.4 5.5 H8.1 M3 1.4 V7.6 M5.6 1.4 V7.6" stroke="#5a5a5a" stroke-width="0.7"/><rect x="0" y="0" width="8.5" height="1.4" fill="#3c3c3c"/><circle cx="7.3" cy="7" r="1.9" fill="#77777b" stroke="#fff" stroke-width="0.5"/><circle cx="7.3" cy="7" r="0.7" fill="#ececf0"/></g></svg>
<span id="t33" style="left:64.60px;top:262.67px;font-size:8.5px;color:#3e3e3e;transform:scaleX(0.7900);">Purchasing.Suppliers</span>
<svg style="left:42px;top:276px;" width="5" height="7"><g transform="translate(0.5,0.975)"><path d="M0.4 0.3 L2.5 2.4 L0.4 4.5" fill="none" stroke="#1f7ad2" stroke-width="1.25"/></g></svg>
<svg style="left:52px;top:275px;" width="10" height="10"><g transform="translate(0.3,0.475)"><rect x="0.4" y="0.4" width="7.7" height="7.2" fill="#ffffff" stroke="#3c3c3c" stroke-width="0.8"/><path d="M0.4 3.3 H8.1 M0.4 5.5 H8.1 M3 1.4 V7.6 M5.6 1.4 V7.6" stroke="#5a5a5a" stroke-width="0.7"/><rect x="0" y="0" width="8.5" height="1.4" fill="#3c3c3c"/></g></svg>
<span id="t34" style="left:64.60px;top:273.57px;font-size:8.5px;color:#3e3e3e;transform:scaleX(0.7900);">Purchasing.SupplierTransactions</span>
<svg style="left:42px;top:287px;" width="5" height="7"><g transform="translate(0.5,0.88)"><path d="M0.4 0.3 L2.5 2.4 L0.4 4.5" fill="none" stroke="#1f7ad2" stroke-width="1.25"/></g></svg>
<svg style="left:51px;top:286px;" width="10" height="10"><g transform="translate(0.3,0.38)"><rect x="0.4" y="0.4" width="7.7" height="7.2" fill="#ffffff" stroke="#3c3c3c" stroke-width="0.8"/><path d="M0.4 3.3 H8.1 M0.4 5.5 H8.1 M3 1.4 V7.6 M5.6 1.4 V7.6" stroke="#5a5a5a" stroke-width="0.7"/><rect x="0" y="0" width="8.5" height="1.4" fill="#3c3c3c"/><circle cx="7.3" cy="7" r="1.9" fill="#77777b" stroke="#fff" stroke-width="0.5"/><circle cx="7.3" cy="7" r="0.7" fill="#ececf0"/></g></svg>
<span id="t35" style="left:64.60px;top:284.48px;font-size:8.5px;color:#3e3e3e;transform:scaleX(0.7900);">Sales.BuyingGroups</span>
<svg style="left:42px;top:298px;" width="5" height="7"><g transform="translate(0.5,0.785)"><path d="M0.4 0.3 L2.5 2.4 L0.4 4.5" fill="none" stroke="#1f7ad2" stroke-width="1.25"/></g></svg>
<svg style="left:51px;top:297px;" width="10" height="10"><g transform="translate(0.3,0.285)"><rect x="0.4" y="0.4" width="7.7" height="7.2" fill="#ffffff" stroke="#3c3c3c" stroke-width="0.8"/><path d="M0.4 3.3 H8.1 M0.4 5.5 H8.1 M3 1.4 V7.6 M5.6 1.4 V7.6" stroke="#5a5a5a" stroke-width="0.7"/><rect x="0" y="0" width="8.5" height="1.4" fill="#3c3c3c"/><circle cx="7.3" cy="7" r="1.9" fill="#77777b" stroke="#fff" stroke-width="0.5"/><circle cx="7.3" cy="7" r="0.7" fill="#ececf0"/></g></svg>
<span id="t36" style="left:64.60px;top:295.38px;font-size:8.5px;color:#3e3e3e;transform:scaleX(0.7900);">Sales.CustomerCategories</span>
<svg style="left:42px;top:309px;" width="5" height="7"><g transform="translate(0.5,0.69)"><path d="M0.4 0.3 L2.5 2.4 L0.4 4.5" fill="none" stroke="#1f7ad2" stroke-width="1.25"/></g></svg>
<svg style="left:51px;top:308px;" width="10" height="10"><g transform="translate(0.3,0.19)"><rect x="0.4" y="0.4" width="7.7" height="7.2" fill="#ffffff" stroke="#3c3c3c" stroke-width="0.8"/><path d="M0.4 3.3 H8.1 M0.4 5.5 H8.1 M3 1.4 V7.6 M5.6 1.4 V7.6" stroke="#5a5a5a" stroke-width="0.7"/><rect x="0" y="0" width="8.5" height="1.4" fill="#3c3c3c"/><circle cx="7.3" cy="7" r="1.9" fill="#77777b" stroke="#fff" stroke-width="0.5"/><circle cx="7.3" cy="7" r="0.7" fill="#ececf0"/></g></svg>
<span id="t37" style="left:64.60px;top:306.29px;font-size:8.5px;color:#3e3e3e;transform:scaleX(0.7900);">Sales.Customers</span>
<svg style="left:42px;top:320px;" width="5" height="7"><g transform="translate(0.5,0.595)"><path d="M0.4 0.3 L2.5 2.4 L0.4 4.5" fill="none" stroke="#1f7ad2" stroke-width="1.25"/></g></svg>
<svg style="left:52px;top:319px;" width="10" height="10"><g transform="translate(0.3,0.095)"><rect x="0.4" y="0.4" width="7.7" height="7.2" fill="#ffffff" stroke="#3c3c3c" stroke-width="0.8"/><path d="M0.4 3.3 H8.1 M0.4 5.5 H8.1 M3 1.4 V7.6 M5.6 1.4 V7.6" stroke="#5a5a5a" stroke-width="0.7"/><rect x="0" y="0" width="8.5" height="1.4" fill="#3c3c3c"/></g></svg>
<span id="t38" style="left:64.60px;top:317.19px;font-size:8.5px;color:#3e3e3e;transform:scaleX(0.7900);">Sales.CustomerTransactions</span>
<svg style="left:42px;top:331px;" width="5" height="7"><g transform="translate(0.5,0.5)"><path d="M0.4 0.3 L2.5 2.4 L0.4 4.5" fill="none" stroke="#1f7ad2" stroke-width="1.25"/></g></svg>
<svg style="left:52px;top:330px;" width="10" height="9"><g transform="translate(0.3,0)"><rect x="0.4" y="0.4" width="7.7" height="7.2" fill="#ffffff" stroke="#3c3c3c" stroke-width="0.8"/><path d="M0.4 3.3 H8.1 M0.4 5.5 H8.1 M3 1.4 V7.6 M5.6 1.4 V7.6" stroke="#5a5a5a" stroke-width="0.7"/><rect x="0" y="0" width="8.5" height="1.4" fill="#3c3c3c"/></g></svg>
<span id="t39" style="left:64.60px;top:328.10px;font-size:8.5px;color:#3e3e3e;transform:scaleX(0.7900);">Sales.InvoiceLines</span>
<svg style="left:63px;top:339px;" width="112" height="13"><g transform="translate(0,0.605)"><rect x="0" y="0" width="111" height="10.4" fill="#0078d7"/></g></svg>
<svg style="left:42px;top:342px;" width="5" height="7"><g transform="translate(0.5,0.405)"><path d="M0.4 0.3 L2.5 2.4 L0.4 4.5" fill="none" stroke="#1f7ad2" stroke-width="1.25"/></g></svg>
<svg style="left:52px;top:340px;" width="10" height="10"><g transform="translate(0.3,0.905)"><rect x="0.4" y="0.4" width="7.7" height="7.2" fill="#ffffff" stroke="#3c3c3c" stroke-width="0.8"/><path d="M0.4 3.3 H8.1 M0.4 5.5 H8.1 M3 1.4 V7.6 M5.6 1.4 V7.6" stroke="#5a5a5a" stroke-width="0.7"/><rect x="0" y="0" width="8.5" height="1.4" fill="#3c3c3c"/></g></svg>
<span id="t40" style="left:64.60px;top:339.00px;font-size:8.5px;color:#ffffff;transform:scaleX(0.7900);">Sales.Invoices</span>
<svg style="left:42px;top:353px;" width="5" height="7"><g transform="translate(0.5,0.31)"><path d="M0.4 0.3 L2.5 2.4 L0.4 4.5" fill="none" stroke="#1f7ad2" stroke-width="1.25"/></g></svg>
<svg style="left:52px;top:351px;" width="10" height="10"><g transform="translate(0.3,0.81)"><rect x="0.4" y="0.4" width="7.7" height="7.2" fill="#ffffff" stroke="#3c3c3c" stroke-width="0.8"/><path d="M0.4 3.3 H8.1 M0.4 5.5 H8.1 M3 1.4 V7.6 M5.6 1.4 V7.6" stroke="#5a5a5a" stroke-width="0.7"/><rect x="0" y="0" width="8.5" height="1.4" fill="#3c3c3c"/></g></svg>
<span id="t41" style="left:64.60px;top:349.91px;font-size:8.5px;color:#3e3e3e;transform:scaleX(0.7970);">Sales.OrderLines</span>
<svg style="left:42px;top:364px;" width="5" height="7"><g transform="translate(0.5,0.215)"><path d="M0.4 0.3 L2.5 2.4 L0.4 4.5" fill="none" stroke="#1f7ad2" stroke-width="1.25"/></g></svg>
<svg style="left:52px;top:362px;" width="10" height="10"><g transform="translate(0.3,0.715)"><rect x="0.4" y="0.4" width="7.7" height="7.2" fill="#ffffff" stroke="#3c3c3c" stroke-width="0.8"/><path d="M0.4 3.3 H8.1 M0.4 5.5 H8.1 M3 1.4 V7.6 M5.6 1.4 V7.6" stroke="#5a5a5a" stroke-width="0.7"/><rect x="0" y="0" width="8.5" height="1.4" fill="#3c3c3c"/></g></svg>
<span id="t42" style="left:64.60px;top:360.81px;font-size:8.5px;color:#3e3e3e;transform:scaleX(0.8020);">Sales.Orders</span>
<svg style="left:42px;top:375px;" width="5" height="6"><g transform="translate(0.5,0.12)"><path d="M0.4 0.3 L2.5 2.4 L0.4 4.5" fill="none" stroke="#1f7ad2" stroke-width="1.25"/></g></svg>
<svg style="left:52px;top:373px;" width="10" height="10"><g transform="translate(0.3,0.62)"><rect x="0.4" y="0.4" width="7.7" height="7.2" fill="#ffffff" stroke="#3c3c3c" stroke-width="0.8"/><path d="M0.4 3.3 H8.1 M0.4 5.5 H8.1 M3 1.4 V7.6 M5.6 1.4 V7.6" stroke="#5a5a5a" stroke-width="0.7"/><rect x="0" y="0" width="8.5" height="1.4" fill="#3c3c3c"/></g></svg>
<span id="t43" style="left:64.60px;top:371.72px;font-size:8.5px;color:#3e3e3e;transform:scaleX(0.7795);">Sales.SpecialDeals</span>
<svg style="left:42px;top:386px;" width="5" height="6"><g transform="translate(0.5,0.025)"><path d="M0.4 0.3 L2.5 2.4 L0.4 4.5" fill="none" stroke="#1f7ad2" stroke-width="1.25"/></g></svg>
<svg style="left:52px;top:384px;" width="10" height="10"><g transform="translate(0.3,0.525)"><rect x="0.4" y="0.4" width="7.7" height="7.2" fill="#ffffff" stroke="#3c3c3c" stroke-width="0.8"/><path d="M0.4 3.3 H8.1 M0.4 5.5 H8.1 M3 1.4 V7.6 M5.6 1.4 V7.6" stroke="#5a5a5a" stroke-width="0.7"/><rect x="0" y="0" width="8.5" height="1.4" fill="#3c3c3c"/></g></svg>
<span id="t44" style="left:64.60px;top:382.62px;font-size:8.5px;color:#3e3e3e;transform:scaleX(0.7900);">Warehouse.ColdRoomTemperatures</span>
<svg style="left:3px;top:389px;" width="183" height="13"><g transform="translate(0,0.5)"><rect x="0" y="0" width="182" height="11" fill="#f3f3f5"/></g></svg>
<svg style="left:13px;top:390px;" width="105" height="11"><g transform="translate(0,0.5)"><rect x="0" y="0" width="103.5" height="9.5" fill="#e2e2e6"/></g></svg>
<svg style="left:6px;top:392px;" width="5" height="7"><g transform="translate(0.4,0.7)"><polygon points="2.8,0 2.8,4.4 0,2.2" fill="#666"/></g></svg>
<svg style="left:167px;top:392px;" width="5" height="7"><g transform="translate(0.4,0.7)"><polygon points="0,0 0,4.4 2.8,2.2" fill="#777"/></g></svg>
<svg style="left:174px;top:110px;" width="12" height="281"><g transform="translate(0.5,0.5)"><rect x="0" y="0" width="10.5" height="279" fill="#f3f3f5"/></g></svg>
<svg style="left:178px;top:382px;" width="5" height="4"><g transform="translate(0,0.2)"><polygon points="0,0 4,0 2.0,2.8" fill="#666"/></g></svg>
<svg style="left:185px;top:74px;" width="2" height="328"><g transform="translate(0,0.5)"><rect x="0" y="0" width="1" height="326" fill="#cfcfd6"/></g></svg>
<svg style="left:188px;top:92px;" width="442" height="281"><g transform="translate(0.5,0)"><rect x="0" y="0" width="440" height="279.5" fill="#ffffff"/></g></svg>
<svg style="left:188px;top:92px;" width="442" height="11"><g transform="translate(0.5,0)"><rect x="0" y="0" width="440" height="10" fill="#e6e6fa"/></g></svg>
<svg style="left:188px;top:102px;" width="15" height="271"><g transform="translate(0.5,0)"><rect x="0" y="0" width="13" height="269.5" fill="#f5f5f7"/></g></svg>
<div style="left:188px;top:92px;width:1px;height:289px;background:#dcdce6;"></div>
<div style="left:266px;top:74px;width:64px;height:18px;background:#f6f6f8;border:1px solid #d6d6de;border-bottom:none;box-sizing:border-box;"></div>
<svg style="left:272px;top:77px;" width="11" height="11"><g transform="translate(0.4,0.8)"><path d="M2.3 6.6 V0.6 H7.7 Q8.5 0.6 8.5 1.5 V2.1 H6.8 V7.4 Q6.8 8.3 5.8 8.3 H1 Q0.3 8.3 0.3 7.5 V6.7 H5" fill="#fff" stroke="#333" stroke-width="0.9"/><path d="M0.6 7.8 H5.8" stroke="#333" stroke-width="1.3"/></g></svg>
<span id="t45" style="left:283.60px;top:77.30px;font-size:8.5px;color:#1e1e1e;font-weight:bold;transform:scaleX(0.8156);">SQL.sql</span>
<svg style="left:317px;top:80px;" width="9" height="8"><g transform="translate(0.5,0)"><circle cx="3.5" cy="3.5" r="3.5" fill="#6a6a6a"/><path d="M2.1 2.1 L4.9 4.9 M4.9 2.1 L2.1 4.9" stroke="#fff" stroke-width="0.9"/></g></svg>
<svg style="left:627px;top:81px;" width="5" height="5"><g transform="translate(0,0.95)"><polygon points="0,0 3.8,0 1.9,2.1" fill="#333"/></g></svg>
<svg style="left:628px;top:92px;" width="13" height="291"><g transform="translate(0.5,0)"><rect x="0" y="0" width="11" height="289.5" fill="#f4f4f6"/></g></svg>
<div style="left:628px;top:92px;width:12px;height:11px;background:#f7f7f9;border:1px solid #d4d4da;box-sizing:border-box;"></div>
<svg style="left:630px;top:94px;" width="9" height="8"><g transform="translate(0.8,0)"><path d="M0 3.4 H6.5" stroke="#222" stroke-width="1"/><polygon points="3.25,0.4 4.6,2 1.9,2" fill="#999"/><polygon points="3.25,6.4 4.6,4.8 1.9,4.8" fill="#999"/></g></svg>
<svg style="left:631px;top:106px;" width="6" height="5"><g transform="translate(0.6,0.8)"><polygon points="2,0 4,3 0,3" fill="#d0d0d4"/></g></svg>
<svg style="left:631px;top:364px;" width="6" height="4"><g transform="translate(0.6,0.2)"><polygon points="0,0 4.2,0 2.1,2.8" fill="#b8b8bc"/></g></svg>
<svg style="left:188px;top:371px;" width="442" height="12"><g transform="translate(0.5,0.5)"><rect x="0" y="0" width="440" height="10" fill="#f3f3f5"/></g></svg>
<div style="left:189px;top:371px;width:12px;height:11px;background:#fafafb;border:1px solid #d8d8e0;box-sizing:border-box;"></div>
<svg style="left:192px;top:373px;" width="8" height="8"><g transform="translate(0,0.3)"><path d="M3.5 0 V6.5" stroke="#222" stroke-width="1"/><polygon points="0.4,3.25 2,1.9 2,4.6" fill="#888"/><polygon points="6.6,3.25 5,1.9 5,4.6" fill="#888"/></g></svg>
<svg style="left:206px;top:374px;" width="5" height="6"><g transform="translate(0.6,0.3)"><polygon points="2.6,0 2.6,4.4 0,2.2" fill="#c0c0c4"/></g></svg>
<svg style="left:621px;top:374px;" width="5" height="6"><g transform="translate(0.4,0.6)"><polygon points="0,0 0,4.4 2.8,2.2" fill="#c0c0c4"/></g></svg>
<svg style="left:188px;top:381px;" width="454" height="21"><g transform="translate(0.5,0.5)"><rect x="0" y="0" width="452.5" height="19" fill="#eeeef2"/></g></svg>
<svg style="left:188px;top:382px;" width="42" height="20"><g transform="translate(0.5,0)"><rect x="0" y="0" width="40.5" height="18.5" fill="#d8d8dc"/></g></svg>
<svg style="left:195px;top:386px;" width="10" height="11"><g transform="translate(0.2,0.5)"><path d="M2.3 6.6 V0.6 H7.7 Q8.5 0.6 8.5 1.5 V2.1 H6.8 V7.4 Q6.8 8.3 5.8 8.3 H1 Q0.3 8.3 0.3 7.5 V6.7 H5" fill="#fff" stroke="#333" stroke-width="0.9"/><path d="M0.6 7.8 H5.8" stroke="#333" stroke-width="1.3"/></g></svg>
<span id="t46" style="left:207.10px;top:385.00px;font-size:8.5px;color:#1e1e1e;transform:scaleX(1.0375);">Text</span>
<div style="left:230px;top:384px;width:1px;height:14px;background:#d8d8de;"></div>
<svg style="left:239px;top:388px;" width="8" height="7"><g transform="translate(0.5,0)"><path d="M3 0 V6 M0 3 H6" stroke="#222" stroke-width="1.1"/></g></svg>
<div style="left:326px;top:384px;width:1px;height:14px;background:#d8d8de;"></div>
<svg style="left:335px;top:386px;" width="7" height="10"><g transform="translate(0,0)"><path d="M1.8 0 V2.2 M4.2 0 V2.2" stroke="#2f9e3f" stroke-width="0.9"/><path d="M0.6 2.2 H5.4 V4.4 Q5.4 6 3.7 6.2 V9 H2.3 V6.2 Q0.6 6 0.6 4.4 Z" fill="#2f9e3f"/></g></svg>
<span id="t47" style="left:346.10px;top:385.00px;font-size:8.5px;color:#3e3e3e;transform:scaleX(0.9209);">Connected.</span>
<svg style="left:392px;top:384px;" width="3" height="15"><g transform="translate(0.5,0)"><rect x="0" y="0" width="1" height="14" fill="#d8d8de"/></g></svg>
<span id="t48" style="left:398.60px;top:385.00px;font-size:8.5px;color:#3e3e3e;transform:scaleX(0.8111);">demo\SQLEXPRESS02 (16)</span>
<div style="left:493px;top:384px;width:1px;height:14px;background:#d8d8de;"></div>
<span id="t49" style="left:498.60px;top:385.00px;font-size:8.5px;color:#3e3e3e;transform:scaleX(0.8444);">sa</span>
<div style="left:513px;top:384px;width:1px;height:14px;background:#d8d8de;"></div>
<span id="t50" style="left:518.60px;top:385.00px;font-size:8.5px;color:#3e3e3e;transform:scaleX(0.9234);">WideWorldImporters</span>
<svg style="left:596px;top:384px;" width="3" height="15"><g transform="translate(0.5,0)"><rect x="0" y="0" width="1" height="14" fill="#d8d8de"/></g></svg>
<svg style="left:598px;top:382px;" width="22" height="20"><g transform="translate(0,0)"><rect x="0" y="0" width="20.5" height="18.5" fill="#d6d6da"/></g></svg>
<svg style="left:604px;top:387px;" width="10" height="9"><g transform="translate(0,0)"><rect x="0.5" y="0.5" width="7.5" height="7" fill="#fff" stroke="#222" stroke-width="1"/><rect x="0.5" y="4" width="7.5" height="3.5" fill="#222"/></g></svg>
<svg style="left:624px;top:387px;" width="10" height="9"><g transform="translate(0.5,0)"><rect x="0.5" y="0.5" width="7.5" height="7" fill="#fff" stroke="#333" stroke-width="0.9"/></g></svg>
<svg style="left:0px;top:400px;" width="642" height="21"><g transform="translate(0,0.5)"><rect x="0" y="0" width="641" height="19.5" fill="#f0f0f0"/></g></svg>
<svg style="left:0px;top:400px;" width="642" height="3"><g transform="translate(0,0.5)"><rect x="0" y="0" width="641" height="1" fill="#d0d0d8"/></g></svg>
<div style="left:636px;top:412px;width:1px;height:1px;background:#b0b0b4;"></div>
<div style="left:634px;top:414px;width:1px;height:1px;background:#b0b0b4;"></div>
<div style="left:636px;top:414px;width:1px;height:1px;background:#b0b0b4;"></div>
<div style="left:632px;top:416px;width:1px;height:1px;background:#b0b0b4;"></div>
<div style="left:634px;top:416px;width:1px;height:1px;background:#b0b0b4;"></div>
<div style="left:636px;top:416px;width:1px;height:1px;background:#b0b0b4;"></div>
<div style="left:76px;top:69px;width:180px;height:278px;background:#ffffff;box-shadow:0 0 0 1px #d9d9e3, 1px 2px 5px 1px rgba(0,0,0,0.09);"></div>
<svg style="left:77px;top:87px;" width="180" height="19"><g transform="translate(0,0.3)"><rect x="0" y="0" width="178.3" height="17.4" fill="#c9dff6"/></g></svg>
<span id="t51" style="left:98.60px;top:72.30px;font-size:8.5px;color:#303030;transform:scaleX(0.8900);">New Table</span>
<span id="t52" style="left:98.60px;top:89.80px;font-size:8.5px;color:#303030;transform:scaleX(0.9000);">Edit Table</span>
<span id="t53" style="left:98.60px;top:108.00px;font-size:8.5px;color:#303030;transform:scaleX(0.8519);">Retrieve Data</span>
<span id="t54" style="left:98.60px;top:125.80px;font-size:8.5px;color:#303030;transform:scaleX(0.8975);">Manage Index Fragmentation...</span>
<span id="t55" style="left:98.60px;top:145.80px;font-size:8.5px;color:#303030;transform:scaleX(0.8635);">Export Data...</span>
<span id="t56" style="left:98.60px;top:163.50px;font-size:8.5px;color:#303030;transform:scaleX(0.8827);">Import Data...</span>
<span id="t57" style="left:98.60px;top:181.70px;font-size:8.5px;color:#303030;transform:scaleX(0.8911);">Truncate Table</span>
<span id="t58" style="left:98.60px;top:201.70px;font-size:8.5px;color:#303030;transform:scaleX(0.9072);">Duplicate Object...</span>
<span id="t59" style="left:98.60px;top:219.50px;font-size:8.5px;color:#303030;transform:scaleX(0.8732);">Generate Script As</span>
<span id="t60" style="left:98.60px;top:237.30px;font-size:8.5px;color:#303030;transform:scaleX(0.8828);">Send to</span>
<span id="t61" style="left:98.60px;top:255.50px;font-size:8.5px;color:#303030;transform:scaleX(0.8620);">Show Details</span>
<span id="t62" style="left:98.60px;top:275.00px;font-size:8.5px;color:#303030;transform:scaleX(0.8625);">Rename</span>
<span id="t63" style="left:98.60px;top:293.20px;font-size:8.5px;color:#303030;transform:scaleX(0.8640);">Delete</span>
<span id="t64" style="left:98.60px;top:313.00px;font-size:8.5px;color:#303030;transform:scaleX(0.8333);">Refresh</span>
<span id="t65" style="left:98.60px;top:331.30px;font-size:8.5px;color:#303030;transform:scaleX(0.8744);">Properties</span>
<svg style="left:97px;top:141px;" width="159" height="3"><g transform="translate(0,0.5)"><rect x="0" y="0" width="157.5" height="1" fill="#d8d8dc"/></g></svg>
<svg style="left:97px;top:196px;" width="159" height="3"><g transform="translate(0,0.7)"><rect x="0" y="0" width="157.5" height="1" fill="#d8d8dc"/></g></svg>
<svg style="left:97px;top:271px;" width="159" height="3"><g transform="translate(0,0.5)"><rect x="0" y="0" width="157.5" height="1" fill="#d8d8dc"/></g></svg>
<svg style="left:97px;top:309px;" width="159" height="2"><g transform="translate(0,0)"><rect x="0" y="0" width="157.5" height="1" fill="#d8d8dc"/></g></svg>
<span id="t66" style="left:231.90px;top:275.00px;font-size:8.5px;color:#303030;transform:scaleX(0.8000);">F2</span>
<span id="t67" style="left:218.10px;top:293.20px;font-size:8.5px;color:#303030;transform:scaleX(0.8720);">Delete</span>
<span id="t68" style="left:231.90px;top:313.00px;font-size:8.5px;color:#303030;transform:scaleX(0.8000);">F5</span>
<span id="t69" style="left:231.90px;top:331.30px;font-size:8.5px;color:#303030;transform:scaleX(0.8000);">F4</span>
<svg style="left:246px;top:223px;" width="4" height="6"><g transform="translate(0.6,0.5)"><polygon points="0,0 0,4.2 2.4,2.1" fill="#222"/></g></svg>
<svg style="left:246px;top:241px;" width="4" height="6"><g transform="translate(0.6,0.3)"><polygon points="0,0 0,4.2 2.4,2.1" fill="#222"/></g></svg>
<svg style="left:81px;top:74px;" width="10" height="9"><g transform="translate(0,0.3)"><rect x="0.45" y="0.45" width="8.1" height="6.6" fill="#fff" stroke="#333" stroke-width="0.9"/><path d="M0.5 3 H8.5 M0.5 5 H8.5 M3.1 1 V7 M5.9 1 V7" stroke="#4a4a4a" stroke-width="0.75"/><rect x="0" y="0" width="9" height="1.3" fill="#333"/></g></svg>
<svg style="left:80px;top:127px;" width="11" height="10"><g transform="translate(0.7,0.3)"><path d="M0.45 2 V0.45 H2 M7.3 0.45 H8.85 V2 M8.85 6.4 V7.95 H7.3 M2 7.95 H0.45 V6.4" fill="none" stroke="#3a3a3a" stroke-width="0.9"/><rect x="1.6" y="1.8" width="6.1" height="4.9" fill="#fff" stroke="#333" stroke-width="0.9"/><path d="M1.6 4.6 H7.7 M3.7 2.4 V6.7 M5.7 2.4 V6.7" stroke="#333" stroke-width="0.8"/><rect x="1.2" y="1.4" width="6.9" height="1.5" fill="#333"/></g></svg>
<svg style="left:81px;top:147px;" width="11" height="10"><g transform="translate(0,0.5)"><rect x="2.6" y="3.3" width="6.6" height="5" fill="#333"/><rect x="3.5" y="5.3" width="1.1" height="2.3" fill="#fff"/><rect x="5.35" y="5.3" width="1.1" height="2.3" fill="#fff"/><rect x="7.2" y="5.3" width="1.1" height="2.3" fill="#fff"/><path d="M0.8 3.8 V2.4 Q0.8 1.4 1.8 1.4 H3.2" fill="none" stroke="#1a62c4" stroke-width="1.2"/><path d="M2.8 -0.2 L4.8 1.4 L2.8 3 Z" fill="#1a62c4"/></g></svg>
<svg style="left:81px;top:165px;" width="11" height="10"><g transform="translate(0,0)"><rect x="2.6" y="3.3" width="6.6" height="5" fill="#333"/><rect x="3.5" y="5.3" width="1.1" height="2.3" fill="#fff"/><rect x="5.35" y="5.3" width="1.1" height="2.3" fill="#fff"/><rect x="7.2" y="5.3" width="1.1" height="2.3" fill="#fff"/><path d="M0.8 3.8 V2.4 Q0.8 1.4 1.8 1.4 H3.2" fill="none" stroke="#1a62c4" stroke-width="1.2"/><path d="M2.8 -0.2 L4.8 1.4 L2.8 3 Z" fill="#1a62c4"/></g></svg>
<svg style="left:81px;top:257px;" width="10" height="11"><g transform="translate(0,0)"><path d="M2.4 2.4 V0.9 Q4.4 0.1 6.4 0.5 L8.4 1.6 V7.4 Q7.4 8 6.4 7.8" fill="#8a8a8e" stroke="#333" stroke-width="0.8"/><rect x="0.5" y="2.5" width="5.8" height="6.4" rx="0.6" fill="#f0f0f2" stroke="#333" stroke-width="0.9"/><circle cx="3.4" cy="5.7" r="1.5" fill="#fff" stroke="#333" stroke-width="0.8"/><path d="M4.4 6.8 L5.6 8.2" stroke="#333" stroke-width="0.8"/></g></svg>
<svg style="left:80px;top:295px;" width="10" height="10"><g transform="translate(0.8,0.5)"><path d="M0.4 0.4 L7.6 7.6 M7.6 0.4 L0.4 7.6" stroke="#bf2d28" stroke-width="1.5"/></g></svg>
<svg style="left:81px;top:315px;" width="10" height="10"><g transform="translate(0,0.2) scale(0.9647,0.9667) translate(-0,-0)"><path d="M6.9 2.6 A3.4 3.4 0 1 0 7.9 5.2" fill="none" stroke="#1a62c4" stroke-width="1.4"/><path d="M4.2 -0.2 L7.8 1.2 L5.3 4.2 Z" fill="#1a62c4"/></g></svg>
<svg style="left:81px;top:333px;" width="10" height="10"><g transform="translate(0,0.5) scale(0.9111,0.9111) translate(-0,-0)"><path d="M1.1 7.9 L4.8 4.2" stroke="#2e2e2e" stroke-width="2.3" stroke-linecap="round"/><path d="M8.7 1.7 L6.9 3.5 L5.5 2.1 L7.3 0.3 A3 3 0 1 0 8.7 1.7 Z" fill="#2e2e2e"/></g></svg>
</body></html>
